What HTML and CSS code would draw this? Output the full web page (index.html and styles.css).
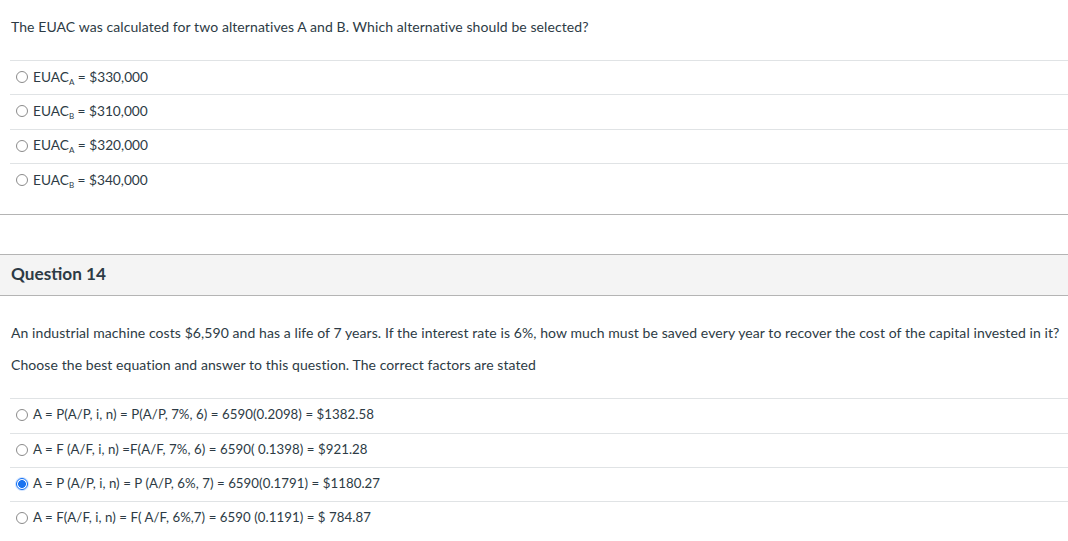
FILE: index.html
```html
<!DOCTYPE html>
<html>
<head>
<meta charset="utf-8">
<link rel="stylesheet" href="styles.css">
</head>
<body>
<div class="prev">
  <p class="qtext first">The EUAC was calculated for two alternatives A and B. Which alternative should be selected?</p>
  <ul class="answers">
    <li class="answer"><span class="radio"></span><span>EUAC<sub>A</sub> = $330,000</span></li>
    <li class="answer"><span class="radio"></span><span>EUAC<sub>B</sub> = $310,000</span></li>
    <li class="answer"><span class="radio"></span><span>EUAC<sub>A</sub> = $320,000</span></li>
    <li class="answer"><span class="radio"></span><span>EUAC<sub>B</sub> = $340,000</span></li>
  </ul>
</div>
<div class="question">
  <div class="header">Question 14</div>
  <div class="body">
    <p class="qtext">An industrial machine costs $6,590 and has a life of 7 years. If the interest rate is 6%, how much must be saved every year to recover the cost of the capital invested in it?</p>
    <p class="qtext">Choose the best equation and answer to this question. The correct factors are stated</p>
  </div>
  <ul class="answers second">
    <li class="answer"><span class="radio"></span><span>A = P(A/P, i, n) = P(A/P, 7%, 6) = 6590(0.2098) = $1382.58</span></li>
    <li class="answer"><span class="radio"></span><span>A = F (A/F, i, n) =F(A/F, 7%, 6) = 6590( 0.1398) = $921.28</span></li>
    <li class="answer"><span class="radio checked"></span><span>A = P (A/P, i, n) = P (A/P, 6%, 7) = 6590(0.1791) = $1180.27</span></li>
    <li class="answer"><span class="radio"></span><span>A = F(A/F, i, n) = F( A/F, 6%,7) = 6590 (0.1191) = $ 784.87</span></li>
  </ul>
</div>
</body>
</html>
```

FILE: styles.css
```css
html, body {
  margin: 0;
  padding: 0;
  background: #fff;
}
body {
  font-family: Lato, "Open Sans", sans-serif;
  color: #2d3b45;
  font-size: 13px;
  width: 1068px;
  overflow: hidden;
}
.prev {
  border-bottom: 1px solid #b4b4b4;
  padding-bottom: 17px;
}
.qtext {
  margin: 0;
  padding-left: 11px;
  line-height: 18px;
  font-size: 14px;
  letter-spacing: 0.08px;
}
.qtext.first {
  padding-top: 18px;
  margin-bottom: 24px;
}
.answers {
  list-style: none;
  margin: 0 0 0 10px;
  padding: 0;
}
.answer {
  box-sizing: border-box;
  height: 34.33px;
  border-top: 1px solid #e0e3e5;
  display: flex;
  align-items: center;
  padding-left: 6px;
  padding-bottom: 3px;
  gap: 5px;
  font-size: 13.7px;
}
.answers.second .answer {
  font-size: 13.25px;
  letter-spacing: 0.05px;
}
.answer sub {
  font-size: 8px;
  vertical-align: -3px;
  line-height: 0;
}
.radio {
  box-sizing: border-box;
  width: 12px;
  height: 12px;
  border-radius: 50%;
  border: 1px solid #8b8b8b;
  background: #fff;
  flex: none;
  margin-top: 2px;
}
.radio.checked {
  border: 1px solid #0a6cf5;
  background: radial-gradient(circle, #1a73f0 0 3.6px, #fff 4.2px);
  box-shadow: 0 0 0 1px #cfe2ff;
}
.question {
  margin-top: 39px;
}
.header {
  box-sizing: border-box;
  height: 42px;
  background: #f4f4f4;
  border-top: 1px solid #b4b4b4;
  border-bottom: 1px solid #b4b4b4;
  padding-left: 11px;
  padding-bottom: 4px;
  display: flex;
  align-items: center;
  font-size: 17.2px;
  font-weight: bold;
  color: #2d3b45;
}
.body {
  padding-top: 28px;
  display: flex;
  flex-direction: column;
  gap: 14px;
}
.answers.second {
  margin-top: 24px;
}
```
